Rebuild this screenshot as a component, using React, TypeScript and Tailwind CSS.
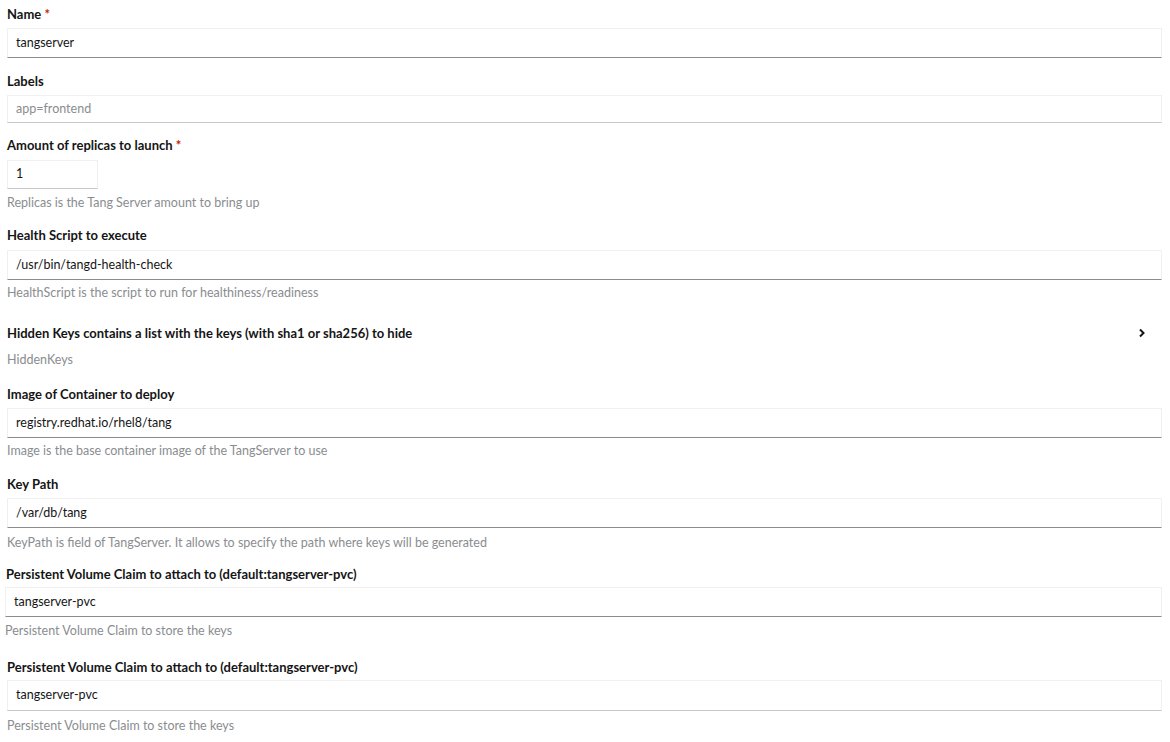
import React from "react";

const font = { fontFamily: "Lato, 'Noto Sans', sans-serif" };

function Label({ text, required, className = "" }: { text: string; required?: boolean; className?: string }) {
  return (
    <div className={"text-[13px] leading-4 font-bold text-[#151515] " + className}>
      {text}
      {required && <span className="text-[#c9190b]"> *</span>}
    </div>
  );
}

function Input({
  value,
  placeholder,
  className = "",
  light,
  h = 30,
}: {
  value?: string;
  placeholder?: string;
  className?: string;
  light?: boolean;
  h?: number;
}) {
  return (
    <div
      style={{ height: h }}
      className={
        "flex items-center px-[8px] bg-white border border-[#f0f0f0] text-[12.5px] " +
        (light ? "border-b-[#c7c7c7] " : "border-b-[#8a8d90] ") +
        className
      }
    >
      {value ? <span className="text-[#151515]">{value}</span> : <span className="text-[#8a8d90]">{placeholder}</span>}
    </div>
  );
}

function Helper({ text, className = "" }: { text: string; className?: string }) {
  return <div className={"text-[12.5px] leading-4 text-[#8a8d90] " + className}>{text}</div>;
}

export default function App() {
  return (
    <div style={font} className="w-[1170px] h-[742px] bg-white pl-[7px] pr-[8px] pt-[6px] overflow-hidden">
      <Label text="Name" required />
      <Input value="tangserver" className="mt-[6px]" />

      <Label text="Labels" className="mt-[15px]" />
      <Input placeholder="app=frontend" className="mt-[6px]" h={28} light />

      <Label text="Amount of replicas to launch" required className="mt-[14px]" />
      <Input value="1" className="mt-[7px] w-[91px]" h={29} light />
      <Helper text="Replicas is the Tang Server amount to bring up" className="mt-[6px]" />

      <Label text="Health Script to execute" className="mt-[16px]" />
      <Input value="/usr/bin/tangd-health-check" className="mt-[7px]" />
      <Helper text="HealthScript is the script to run for healthiness/readiness" className="mt-[5px]" />

      <div className="mt-[24px] flex items-center justify-between pr-[16px]">
        <Label text="Hidden Keys contains a list with the keys (with sha1 or sha256) to hide" />
        <svg width="8" height="10" viewBox="0 0 8 10" className="text-[#151515]">
          <path d="M2 1.5 L5.5 5 L2 8.5" fill="none" stroke="currentColor" strokeWidth="2" />
        </svg>
      </div>
      <Helper text="HiddenKeys" className="mt-[11px]" />

      <Label text="Image of Container to deploy" className="mt-[18px]" />
      <Input value="registry.redhat.io/rhel8/tang" className="mt-[6px]" />
      <Helper text="Image is the base container image of the TangServer to use" className="mt-[5px]" />

      <Label text="Key Path" className="mt-[17px]" />
      <Input value="/var/db/tang" className="mt-[6px]" />
      <Helper text="KeyPath is field of TangServer. It allows to specify the path where keys will be generated" className="mt-[7px]" />

      <div className="-ml-[2px]">
        <Label text="Persistent Volume Claim to attach to (default:tangserver-pvc)" className="mt-[15px] ml-[1px]" />
        <Input value="tangserver-pvc" className="mt-[5px]" />
        <Helper text="Persistent Volume Claim to store the keys" className="mt-[6px]" />
      </div>

      <Label text="Persistent Volume Claim to attach to (default:tangserver-pvc)" className="mt-[20px]" />
      <Input value="tangserver-pvc" className="mt-[5px]" h={31} light />
      <Helper text="Persistent Volume Claim to store the keys" className="mt-[7px]" />
    </div>
  );
}
